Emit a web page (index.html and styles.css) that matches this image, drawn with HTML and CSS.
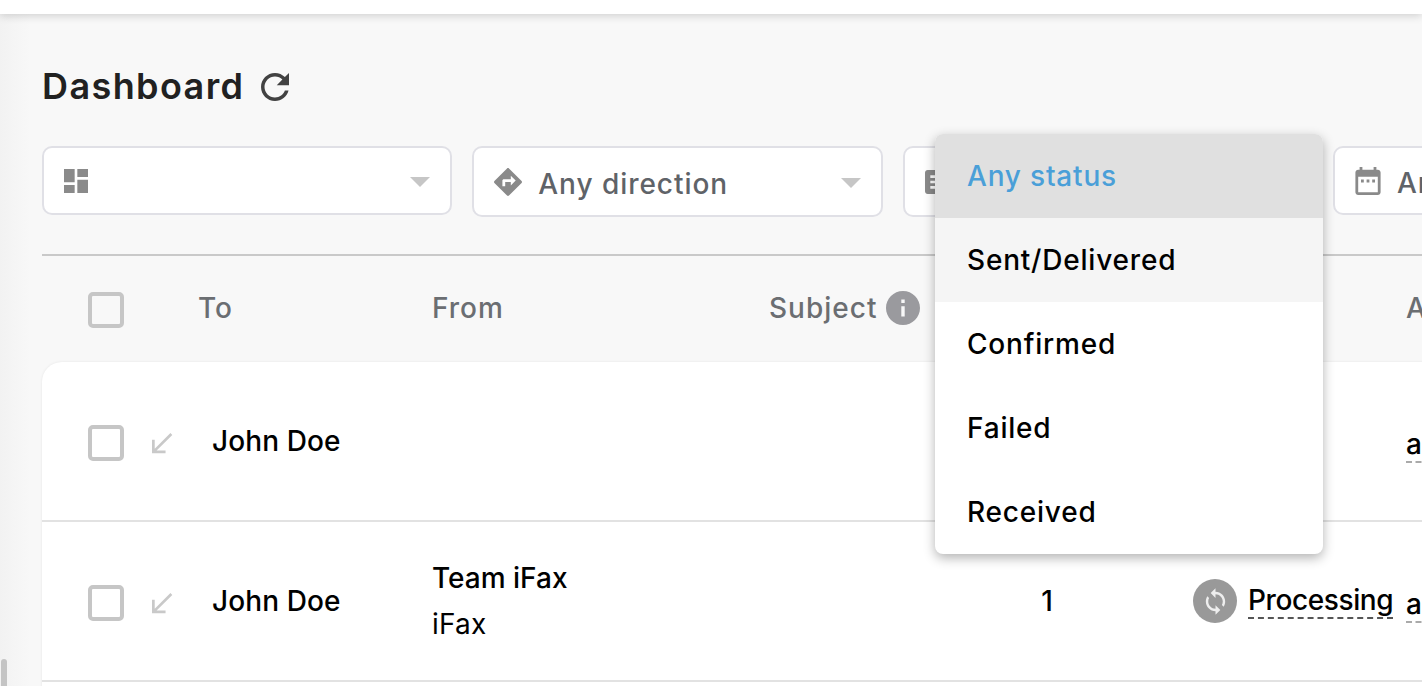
FILE: index.html
```html
<!DOCTYPE html>
<html lang="en">
<head>
  <meta charset="UTF-8" />
  <meta name="viewport" content="width=device-width, initial-scale=1.0" />
  <title>Dashboard</title>
  <link rel="stylesheet" href="styles.css">
</head>
<body>
  <div class="topbar"></div>
  <div class="content">
    <div class="title-row">
      <h1>Dashboard</h1>
      <svg class="refresh" viewBox="4 4 16 16"><path d="M17.65 6.35C16.2 4.9 14.21 4 12 4c-4.42 0-7.99 3.58-7.99 8s3.57 8 7.99 8c3.73 0 6.84-2.55 7.73-6h-2.08c-.82 2.33-3.04 4-5.65 4-3.31 0-6-2.69-6-6s2.69-6 6-6c1.66 0 3.14.69 4.22 1.78L13 11h7V4l-2.35 2.35z"/></svg>
    </div>

    <div class="filters">
      <div class="filter">
        <svg class="filter-icon icon-board" viewBox="3 3 18 18"><path d="M3 13h8V3H3v10zm0 8h8v-6H3v6zm10 0h8V11h-8v10zm0-18v6h8V3h-8z"/></svg>
        <span class="filter-text"></span>
        <span class="caret"></span>
      </div>
      <div class="filter filter-tall">
        <svg class="filter-icon icon-direction" viewBox="2 2 20 20"><path d="M21.71 11.29l-9-9c-.39-.39-1.02-.39-1.41 0l-9 9c-.39.39-.39 1.02 0 1.41l9 9c.39.39 1.02.39 1.41 0l9-9c.39-.38.39-1.01 0-1.41zM14 14.5V12h-4v3H8v-4c0-.55.45-1 1-1h5V7.5l3.5 3.5-3.5 3.5z"/></svg>
        <span class="filter-text">Any direction</span>
        <span class="caret"></span>
      </div>
      <div class="filter filter-tall">
        <svg class="filter-icon icon-status" viewBox="3 3 18 18"><path d="M19 3H5c-1.1 0-2 .9-2 2v14c0 1.1.9 2 2 2h14c1.1 0 2-.9 2-2V5c0-1.1-.9-2-2-2zm-5 14H7v-2h7v2zm3-4H7v-2h10v2zm0-4H7V7h10v2z"/></svg>
        <span class="filter-text">Any status</span>
        <span class="caret"></span>
      </div>
      <div class="filter">
        <svg class="filter-icon icon-date" viewBox="3 2 18 20"><path d="M9 11H7v2h2v-2zm4 0h-2v2h2v-2zm4 0h-2v2h2v-2zm2-7h-1V2h-2v2H8V2H6v2H5c-1.11 0-1.99.9-1.99 2L3 20c0 1.1.89 2 2 2h14c1.1 0 2-.9 2-2V6c0-1.1-.9-2-2-2zm0 16H5V9h14v11z"/></svg>
        <span class="filter-text">Any date</span>
        <span class="caret"></span>
      </div>
    </div>

    <div class="cols table-head">
      <span class="checkbox head-check"></span>
      <span></span>
      <span class="head-label">To</span>
      <span class="head-label">From</span>
      <span class="head-label subject">Subject
        <svg class="info" viewBox="2 2 20 20"><path d="M12 2C6.48 2 2 6.48 2 12s4.48 10 10 10 10-4.48 10-10S17.52 2 12 2zm1 15h-2v-6h2v6zm0-8h-2V7h2v2z"/></svg>
      </span>
      <span class="head-label pages">Pages</span>
      <span class="head-label">Status</span>
      <span class="head-label">Assignee</span>
    </div>

    <div class="card">
      <div class="cols row">
        <span class="checkbox row-check"></span>
        <svg class="arrow" viewBox="5 4 15.5 15.5"><path d="M20 5.41L18.59 4 7 15.59V9H5v10h10v-2H8.41z"/></svg>
        <span class="name">John Doe</span>
        <span></span>
        <span></span>
        <span class="pages"></span>
        <span></span>
        <span class="assignee">admin</span>
      </div>
      <div class="cols row">
        <span class="checkbox row-check"></span>
        <svg class="arrow" viewBox="5 4 15.5 15.5"><path d="M20 5.41L18.59 4 7 15.59V9H5v10h10v-2H8.41z"/></svg>
        <span class="name">John Doe</span>
        <span class="sender">
          <span class="sender-name">Team iFax</span>
          <span class="sender-org">iFax</span>
        </span>
        <span></span>
        <span class="pages">1</span>
        <span class="status">
          <span class="status-dot">
            <svg viewBox="0 0 24 24"><path d="M12 4V1L8 5l4 4V6c3.31 0 6 2.69 6 6 0 1.01-.25 1.97-.7 2.8l1.46 1.46C19.54 15.03 20 13.57 20 12c0-4.42-3.58-8-8-8zm0 14c-3.31 0-6-2.69-6-6 0-1.01.25-1.97.7-2.8L5.24 7.74C4.46 8.97 4 10.43 4 12c0 4.42 3.58 8 8 8v3l4-4-4-4v3z"/></svg>
          </span>
          <span class="status-text">Processing</span>
        </span>
        <span class="assignee">admin</span>
      </div>
      <div class="cols row"></div>
    </div>
  </div>

  <ul class="menu">
    <li class="menu-item selected">Any status</li>
    <li class="menu-item hovered">Sent/Delivered</li>
    <li class="menu-item">Confirmed</li>
    <li class="menu-item">Failed</li>
    <li class="menu-item">Received</li>
  </ul>

  <div class="scroll-thumb"></div>
</body>
</html>
```

FILE: styles.css
```css
* {
  box-sizing: border-box;
}
html, body {
  height: 100%;
}
body {
  margin: 0;
  overflow: hidden;
  font-family: Inter, "Open Sans", sans-serif;
  color: #000;
  background: linear-gradient(90deg, #f2f2f2, #f8f8f8 30px);
}
.topbar {
  height: 14px;
  background: #fff;
  box-shadow: 0 2px 8px rgba(0, 0, 0, 0.16);
}
.content {
  padding-left: 42px;
  width: 1800px;
}
.title-row {
  display: flex;
  align-items: center;
  gap: 17px;
  height: 46px;
  margin-top: 50px;
}
h1 {
  margin: 0 0 2px;
  font-size: 36px;
  font-weight: 600;
  color: #212121;
  letter-spacing: 1.4px;
}
.refresh {
  width: 28px;
  height: 28px;
  fill: #424242;
}
.filters {
  display: flex;
  align-items: flex-start;
  gap: 20px;
  margin-top: 36px;
}
.filter {
  flex: 0 0 410.3px;
  height: 69px;
  display: flex;
  align-items: center;
  padding: 0 20px;
  background: #fff;
  border: 2px solid #e0e0e6;
  border-radius: 10px;
}
.filter-tall {
  height: 71px;
}
.filter-icon {
  fill: #8a8a8a;
  flex: none;
}
.icon-board, .icon-status {
  width: 24px;
  height: 24px;
}
.icon-direction {
  width: 28px;
  height: 28px;
}
.icon-date {
  width: 26px;
  height: 28px;
}
.filter-text {
  flex: 1;
  margin: 4px 0 0 16px;
  font-size: 28px;
  font-weight: 500;
  color: #5f6368;
  letter-spacing: 0.95px;
}
.caret {
  width: 0;
  height: 0;
  margin-top: 3px;
  border-left: 10px solid transparent;
  border-right: 10px solid transparent;
  border-top: 10px solid #c6c6c6;
}
.cols {
  display: grid;
  grid-template-columns: 36px 74px 234px 337px 132px 292px 213px 300px;
  align-items: center;
  padding-left: 46px;
}
.table-head {
  height: 108px;
  margin-top: 37px;
  border-top: 2px solid #c9c9c9;
}
.head-check {
  margin-top: 1px;
}
.head-label {
  margin-bottom: 2px;
  font-size: 28px;
  font-weight: 500;
  color: #6b6e72;
  letter-spacing: 1px;
  white-space: nowrap;
}
.subject {
  display: flex;
  align-items: center;
  gap: 9px;
}
.info {
  flex: none;
  width: 34px;
  height: 34px;
  fill: #9a9a9e;
}
.checkbox {
  display: block;
  width: 36px;
  height: 36px;
  background: #fff;
  border: 4px solid #c6c6c6;
  border-radius: 5px;
}
.table-head .checkbox {
  background: none;
}
.card {
  background: #fff;
  border-radius: 20px 0 0 0;
  box-shadow: 0 0 3px rgba(0, 0, 0, 0.08);
}
.row {
  height: 160px;
  border-bottom: 2px solid #e2e2e2;
  font-size: 28px;
  font-weight: 500;
}
.row-check {
  margin-top: 4px;
}
.arrow {
  width: 21px;
  height: 21px;
  margin: 4px 0 0 28px;
  fill: #c9c9c9;
}
.name {
  padding-left: 14px;
  letter-spacing: 0.1px;
}
.sender {
  display: flex;
  flex-direction: column;
  gap: 12px;
}
.sender-org {
  font-weight: 400;
  letter-spacing: 0.2px;
}
.pages {
  text-align: center;
}
.status {
  display: flex;
  align-items: center;
  gap: 11px;
}
.status-dot {
  width: 44px;
  height: 44px;
  display: flex;
  align-items: center;
  justify-content: center;
  border-radius: 50%;
  background: #999;
}
.status-dot svg {
  width: 29px;
  height: 29px;
  fill: #eee;
}
.status-text {
  border-bottom: 2px dashed #555;
  line-height: 33px;
  letter-spacing: -0.4px;
}
.assignee {
  border-bottom: 2px dashed #aaa;
  justify-self: start;
  line-height: 34px;
  margin-top: 7px;
}
.menu {
  position: absolute;
  left: 935px;
  top: 134px;
  width: 388px;
  margin: 0;
  padding: 0;
  list-style: none;
  overflow: hidden;
  background: #fff;
  border-radius: 8px;
  box-shadow: 0 4px 12px rgba(0, 0, 0, 0.3);
}
.menu-item {
  height: 84px;
  display: flex;
  align-items: center;
  padding-left: 32px;
  font-size: 28px;
  font-weight: 500;
  letter-spacing: 0.8px;
}
.selected {
  background: #e0e0e0;
  color: #4a9fd8;
}
.hovered {
  background: #f5f5f5;
}
.scroll-thumb {
  position: absolute;
  left: 1px;
  top: 659px;
  width: 6px;
  height: 40px;
  border-radius: 3px;
  background: #c4c4c4;
}
```
